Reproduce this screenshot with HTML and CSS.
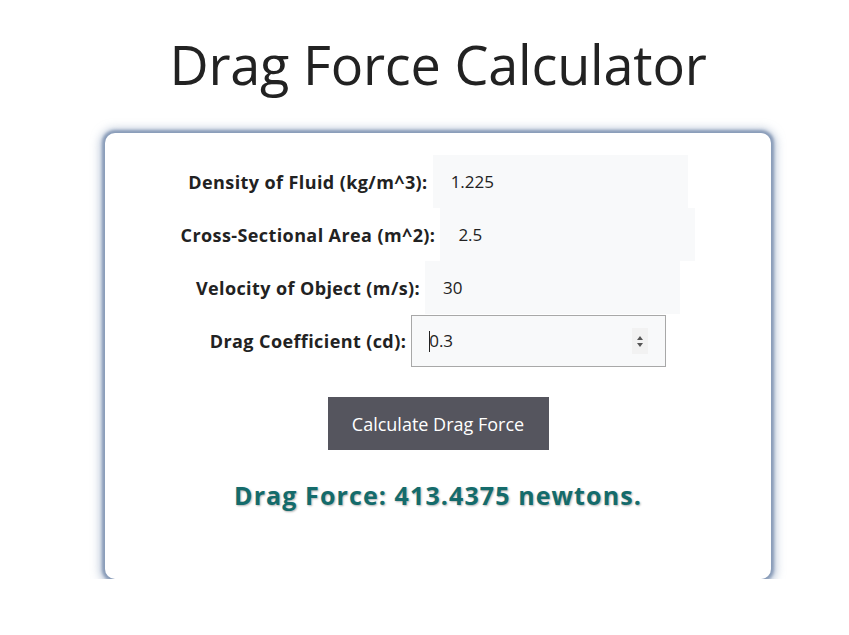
FILE: index.html
```html
<!DOCTYPE html>
<html>
<head>
<meta charset="utf-8">
<link rel="stylesheet" href="styles.css">
</head>
<body>
<div class="page">
  <h1 class="title">Drag Force Calculator</h1>
  <div class="card">
    <div class="row"><label class="lbl">Density of Fluid (kg/m^3):</label><input class="field" type="text" value="1.225"></div>
    <div class="row"><label class="lbl">Cross-Sectional Area (m^2):</label><input class="field" type="text" value="2.5"></div>
    <div class="row"><label class="lbl">Velocity of Object (m/s):</label><input class="field" type="text" value="30"></div>
    <div class="row"><label class="lbl">Drag Coefficient (cd):</label><span class="field-wrap"><input class="field focused" type="text" value="0.3"><span class="caret"></span><span class="spin"><svg width="8" height="16" viewBox="0 0 8 16"><path d="M4 3 L7 7 L1 7 Z" fill="#555"/><path d="M1 10 L7 10 L4 14 Z" fill="#555"/></svg></span></span></div>
    <div class="btn-row"><button class="btn">Calculate Drag Force</button></div>
    <p class="result">Drag Force: 413.4375 newtons.</p>
  </div>
</div>
</body>
</html>
```
FILE: styles.css
```css
html, body { margin: 0; padding: 0; background: #fff; }
body { font-family: "Open Sans", "Noto Sans", sans-serif; color: #222; }
.page { width: 666px; margin-left: 105px; padding-top: 24px; }
.title { margin: 0; text-align: center; font-weight: 400; font-size: 54px; line-height: 80px; color: #222; letter-spacing: -0.2px; }
.card { margin-top: 29px; height: 446px; box-sizing: border-box; background: #fff; border-radius: 10px; box-shadow: 0 0 3px 3px rgba(130,150,180,0.9), 0 1px 10px 5px rgba(140,160,190,0.6); padding-top: 22px; }
.row { display: flex; justify-content: center; align-items: center; height: 53px; gap: 5px; }
.lbl { font-weight: 700; font-size: 18px; letter-spacing: 0.4px; color: #222; }
.field { box-sizing: border-box; width: 255px; height: 53px; border: none; background: #f8f9fa; padding: 0 18px; font-family: inherit; font-size: 17px; color: #222; outline: none; }
.field-wrap { position: relative; display: inline-block; height: 52px; }
.field.focused { border: 1px solid #a8a8a8; height: 52px; padding-left: 17px; }
.caret { position: absolute; left: 18px; top: 16px; width: 1px; height: 21px; background: #222; }
.spin { position: absolute; right: 18px; top: 13px; width: 16px; height: 26px; background: #f2f2f2; display: flex; align-items: center; justify-content: center; }
.btn-row { display: flex; justify-content: center; margin-top: 30px; }
.btn { width: 221px; height: 53px; border: none; background: #55555e; color: #fff; font-family: inherit; font-size: 18px; }
.result { margin: 28px 0 0; text-align: center; font-weight: 700; font-size: 25px; letter-spacing: 1.1px; color: #146b6b; text-shadow: 1px 1px 2px rgba(0,0,0,0.3); }
```
